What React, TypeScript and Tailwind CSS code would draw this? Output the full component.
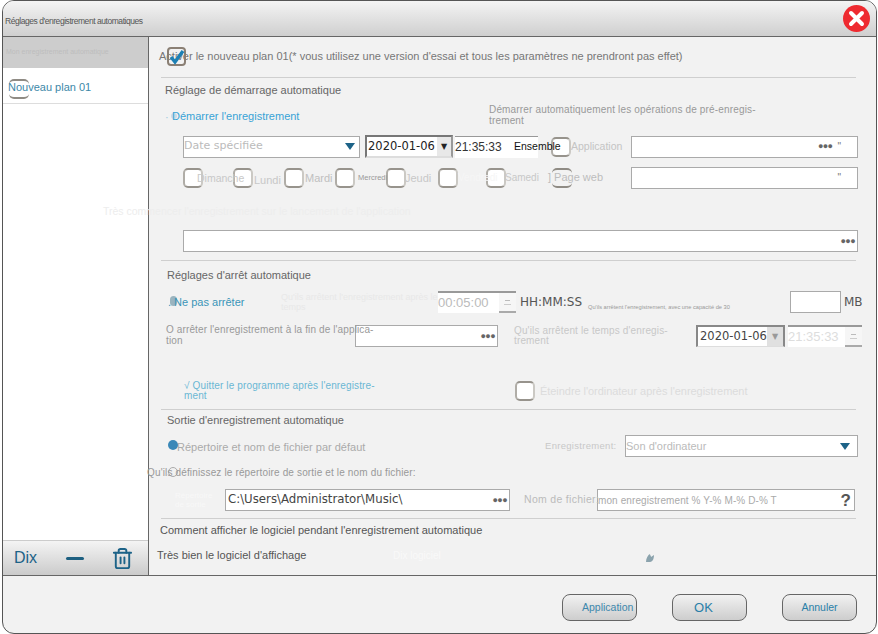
import { Trash2 } from "lucide-react";

const sans = "font-['Liberation_Sans',Arial,sans-serif]";
const dejavu = "font-['DejaVu_Sans',Verdana,sans-serif]";

function Hr() {
  return <div className="ml-[12px] h-px w-[695px] shrink-0 bg-[#cfcfcf]" />;
}

function Box({ className = "" }: { className?: string }) {
  return (
    <span
      className={`block size-[20px] shrink-0 rounded-[5px] border-2 border-[#97938c] border-l-[#b0ada7] border-r-[#cbc9c4] bg-white ${className}`}
    />
  );
}

function Dots({ className = "" }: { className?: string }) {
  return <span className={`text-[9px] font-bold leading-none tracking-[-0.6px] text-[#666] ${className}`}>●●●</span>;
}

function Field({ className = "", children }: { className?: string; children?: React.ReactNode }) {
  return (
    <div className={`flex h-[22px] shrink-0 items-center border border-[#aaa] bg-white ${className}`}>{children}</div>
  );
}

function Caret({ className = "" }: { className?: string }) {
  return (
    <svg width="10" height="7" viewBox="0 0 10 7" className={`ml-auto shrink-0 ${className}`}>
      <path d="M0 0h10L5 7z" fill="#1d6388" />
    </svg>
  );
}

function Spin() {
  return (
    <span className="ml-auto flex h-full w-[17px] shrink-0 flex-col items-center justify-center gap-[3px] border-b-2 border-[#aaa] bg-[#f6f6f6]">
      <span className="h-px w-[5px] bg-[#bbb]" />
      <span className="h-px w-[7px] bg-[#ccc]" />
    </span>
  );
}

const days = [
  { w: "w-[50px]", label: "Dimanche", cls: "left-[14px] top-[3px] text-[10.5px] text-[#c8c8c8]" },
  { w: "w-[51px]", label: "Lundi", cls: "left-[21px] top-[5px] text-[11px] text-[#c8c8c8]" },
  { w: "w-[51px]", label: "Mardi", cls: "left-[21px] top-[3px] text-[11px] text-[#c0c0c0]" },
  { w: "w-[51px]", label: "Mercredi", cls: "left-[23px] top-[3px] text-[7.5px] text-[#999]" },
  { w: "w-[52px]", label: "Jeudi", cls: "left-[19px] top-[3px] text-[11px] text-[#c8c8c8]" },
  { w: "w-[48px]", label: "Vendredi", cls: "left-[20px] top-[3px] text-[10px] text-[#f6f6f6]" },
  { w: "w-[66px]", label: "Samedi", cls: "left-[19px] top-[3px] text-[10px] text-[#c8c8c8]" },
];

export default function App() {
  return (
    <div className={`h-[634px] w-[878px] overflow-hidden bg-white pl-[2px] ${sans}`}>
      <div className="flex h-[634px] w-[875px] flex-col overflow-hidden rounded-[12px] border border-[#555] bg-[#f2f2f2]">
        {/* title bar */}
        <div className="flex h-[36px] shrink-0 items-center justify-between border-b border-[#666] bg-gradient-to-b from-[#f4f4f4] to-[#cfcfcf] pl-[2px] pr-[6px]">
          <span className="mt-[6px] text-[8.5px] tracking-[-0.45px] text-[#555]">Réglages d'enregistrement automatiques</span>
          <svg width="27" height="27" viewBox="0 0 27 27" className="mb-[1px]">
            <circle cx="13.5" cy="13.5" r="13.5" fill="#ee2a30" />
            <path d="M8 8l11 11M19 8L8 19" stroke="#fff" strokeWidth="4" strokeLinecap="round" />
          </svg>
        </div>

        <div className="flex min-h-0 flex-1">
          {/* plan list */}
          <div className="flex w-[146px] shrink-0 flex-col border-r border-[#666] bg-white">
            <div className="flex h-[31px] shrink-0 items-center bg-[#cdcdcd] pl-[3px] text-[7px] text-[#bdbdbd]">
              Mon enregistrement automatique
            </div>
            <div className="relative flex h-[36px] shrink-0 items-center border-b border-[#ddd] pl-[5px] pt-[4px] text-[11px] text-[#3d88a8]">
              <span className="absolute left-[6px] top-[11px] h-[20px] w-[20px] rounded-[5px] border-y-2 border-[#8f8b84]" />
              <span className="relative">Nouveau plan 01</span>
            </div>
            <div className="flex-1" />
            <div className="flex h-[35px] shrink-0 items-center border-t border-[#ccc] bg-gradient-to-b from-[#f4f4f4] to-[#cbcbcb] pl-[11px] text-[16px] text-[#1d6388]">
              <span className="w-[52px]">Dix</span>
              <span className="h-[3px] w-[18px] rounded-full bg-[#1d5f80]" />
              <Trash2 size={23} strokeWidth={2} className="ml-[27px]" />
            </div>
          </div>

          {/* settings */}
          <div className="flex w-[728px] shrink-0 flex-col text-[11px] text-[#666]">
            <div className="relative h-[40px] shrink-0 pl-[10px] pt-[11px] leading-[16px] text-[#777]">
              <span>Activer le nouveau plan 01(* vous utilisez une version d'essai et tous les paramètres ne prendront pas effet)</span>
              <span className="absolute left-[18px] top-[10px] flex size-[19px] items-center justify-center rounded-[4px] border-2 border-[#8a7f74]">
                <svg width="18" height="16" viewBox="0 0 18 16" className="shrink-0">
                  <path d="M3 8l4 5 8-11" fill="none" stroke="#1d80b4" strokeWidth="3.4" />
                </svg>
              </span>
            </div>
            <Hr />

            <div className="flex h-[24px] shrink-0 items-center pl-[16px] text-[#666]">Réglage de démarrage automatique</div>
            <div className="flex h-[33px] shrink-0">
              <div className="relative w-[340px] pl-[23px] pt-[6px] leading-[16px] text-[#38a3d6]">
                <span className="absolute left-[16px] top-[7px] text-[#9fc7dc]">·</span>
                <span className="absolute left-[22px] top-[11px] size-[6px] rounded-full bg-[#c9dbe6]" />
                <span className="relative">Démarrer l'enregistrement</span>
              </div>
              <div className="pt-[3px] text-[10px] leading-[10.5px] tracking-[0.16px] text-[#999]">
                Démarrer automatiquement les opérations de pré-enregis-
                <br />
                trement
              </div>
            </div>

            <div className="flex h-[23px] shrink-0 items-center pl-[34px]">
              <Field className={`w-[177px] text-[11px] text-[#bbb] ${dejavu}`}>
                <span>Date spécifiée</span>
                <Caret className="mr-[4px]" />
              </Field>
              <div className={`ml-[5px] flex h-[23px] w-[88px] shrink-0 items-center border-2 border-[#777] border-b-[#ddd] border-r-[#999] bg-white pl-[1px] text-[11.5px] text-[#222] ${dejavu}`}>
                <span className="whitespace-nowrap">2020-01-06</span>
                <span className="ml-auto flex h-full w-[14px] shrink-0 items-center justify-center bg-[#e8e8e8] text-[8px] text-[#222]">▼</span>
              </div>
              <div className="ml-[2px] flex h-[22px] w-[83px] shrink-0 items-center border-t border-[#999] bg-white text-[12px] text-[#333]">
                <span>21:35:33</span>
              </div>
              <span className="relative z-10 ml-[-24px] w-[37px] whitespace-nowrap text-[10.5px] text-[#111]">Ensemble</span>
              <Box />
              <span className="w-[60px] text-[10.5px] text-[#c4c4c4]">Application</span>
              <Field className="w-[227px] pr-[16px]">
                <Dots className="ml-auto" />
                <span className="ml-[5px] text-[10px] leading-none text-[#777]">"</span>
              </Field>
            </div>

            <div className="mt-[9px] flex h-[22px] shrink-0 items-center pl-[34px]">
              {days.map((d) => (
                <div key={d.label} className={`relative h-[22px] shrink-0 pt-[1px] ${d.w}`}>
                  <Box />
                  <span className={`absolute z-10 whitespace-nowrap leading-[16px] ${d.cls}`}>{d.label}</span>
                </div>
              ))}
              <div className="relative flex h-[22px] w-[79px] shrink-0 pt-[1px]">
                <span className="block size-[20px] rounded-[5px] border-y-2 border-[#8f8b84]" />
                <span className="absolute left-[-4px] top-[2px] whitespace-nowrap text-[#bdbdbd]">] Page web</span>
              </div>
              <Field className="w-[227px] pr-[16px]">
                <span className="ml-auto text-[10px] leading-none text-[#777]">"</span>
              </Field>
            </div>

            <div className="relative z-10 ml-[-46px] flex h-[41px] shrink-0 items-center whitespace-nowrap pt-[4px] text-[10.5px] text-[#ededed]">
              Très commencer l'enregistrement sur le lancement de l'application
            </div>
            <Field className="ml-[34px] w-[675px] justify-end pr-[2px]">
              <Dots />
            </Field>
            <div className="h-[8px] shrink-0" />
            <Hr />

            <div className="flex h-[29px] shrink-0 items-center pl-[18px] text-[#666]">Réglages d'arrêt automatique</div>
            <div className="mt-[1px] flex h-[22px] shrink-0 items-center">
              <div className="relative w-[132px] shrink-0 pl-[19px] text-[#3a95b8]">
                <span className="absolute left-[21px] top-[2px] h-[10px] w-[7px] rounded-full bg-[#9ab4bf]" />
                <span className="relative">. Ne pas arrêter</span>
              </div>
              <span className="w-[157px] shrink-0 text-[9px] leading-[10px] text-[#e8e8e8]">
                Qu'ils arrêtent l'enregistrement après le temps
              </span>
              <div className="flex h-[22px] w-[78px] shrink-0 items-center border-t-2 border-[#999] bg-white text-[13px] text-[#bbb]">
                <span>00:05:00</span>
                <Spin />
              </div>
              <span className={`ml-[4px] w-[68px] shrink-0 text-[12px] text-[#555] ${dejavu}`}>HH:MM:SS</span>
              <span className="mt-[10px] w-[202px] shrink-0 whitespace-nowrap text-[5.7px] text-[#999]">
                Qu'ils arrêtent l'enregistrement, avec une capacité de 30
              </span>
              <Field className="w-[51px]" />
              <span className={`ml-[3px] text-[12px] text-[#555] ${dejavu}`}>MB</span>
            </div>

            <div className="mt-[12px] flex h-[22px] shrink-0 items-center">
              <div className="relative z-10 ml-[17px] mt-[-2px] w-[189px] shrink-0 text-[10px] leading-[11px] tracking-[0.12px] text-[#999]">
                <div className="whitespace-nowrap">O arrêter l'enregistrement à la fin de l'applica-</div>
                <div>tion</div>
              </div>
              <Field className="w-[143px] justify-end pr-[2px]">
                <Dots />
              </Field>
              <div className="ml-[16px] w-[182px] shrink-0 text-[10px] leading-[10px] tracking-[0.14px] text-[#c8c8c8]">
                Qu'ils arrêtent le temps d'enregis-
                <br />
                trement
              </div>
              <div className={`flex h-[22px] w-[89px] shrink-0 items-center border-x-2 border-t-2 border-[#888] border-b border-b-[#ddd] bg-white pl-[2px] text-[11.5px] text-[#444] ${dejavu}`}>
                <span className="whitespace-nowrap">2020-01-06</span>
                <span className="ml-auto flex h-full w-[16px] shrink-0 items-center justify-center bg-[#e0e0e0] text-[8px] text-[#999]">▼</span>
              </div>
              <div className="ml-[3px] flex h-[22px] w-[74px] shrink-0 items-center border-t-2 border-[#999] bg-white text-[13px] text-[#ddd]">
                <span className="whitespace-nowrap">21:35:33</span>
                <Spin />
              </div>
            </div>

            <div className="mt-[33px] flex h-[22px] shrink-0 items-center">
              <div className="ml-[35px] w-[331px] shrink-0 text-[10px] leading-[10px] tracking-[0.13px] text-[#6ab7d4]">
                √ Quitter le programme après l'enregistre-
                <br />
                ment
              </div>
              <Box />
              <span className="ml-[5px] tracking-[-0.05px] text-[#dcdcdc]">Éteindre l'ordinateur après l'enregistrement</span>
            </div>
            <div className="h-[7px] shrink-0" />
            <Hr />

            <div className="flex h-[21px] shrink-0 items-center pl-[18px] text-[#666]">Sortie d'enregistrement automatique</div>
            <div className="mt-[4px] flex h-[22px] shrink-0 items-center">
              <div className="relative w-[396px] shrink-0 pl-[28px] pt-[2px] text-[#aaa]">
                <span className="absolute left-[19px] top-[3px] size-[10px] rounded-full bg-[#3a88b8]" />
                Répertoire et nom de fichier par défaut
              </div>
              <span className="w-[80px] shrink-0 text-[9.5px] tracking-[0.3px] text-[#c8c8c8]">Enregistrement:</span>
              <Field className="w-[233px] pt-[1px] text-[#bbb]">
                <span>Son d'ordinateur</span>
                <Caret className="mr-[7px]" />
              </Field>
            </div>
            <div className="relative z-10 ml-[-2px] flex h-[30px] shrink-0 items-center whitespace-nowrap text-[10px] tracking-[0.15px] text-[#999]">
              <span className="absolute left-[21px] top-[10px] size-[10px] rounded-full border border-[#aaa]" />
              <span className="relative">Qu'ils définissez le répertoire de sortie et le nom du fichier:</span>
            </div>
            <div className="mt-[2px] flex h-[22px] shrink-0 items-center">
              <span className="ml-[26px] w-[50px] shrink-0 text-[8px] leading-[9px] text-[#f8f8f8]">
                Répertoire
                <br />
                de sortie
              </span>
              <Field className="w-[285px] pl-[2px] pr-[2px]">
                <span className={`text-[11.75px] text-[#444] ${dejavu}`}>C:\Users\Administrator\Music\</span>
                <Dots className="ml-auto" />
              </Field>
              <span className="relative z-10 ml-[14px] w-[73px] shrink-0 whitespace-nowrap text-[10.5px] tracking-[0.3px] text-[#bbb]">Nom de fichier:</span>
              <Field className="w-[258px] pr-[3px]">
                <span className="whitespace-nowrap text-[10px] tracking-[0.1px] text-[#aaa]">mon enregistrement % Y-% M-% D-% T</span>
                <span className="ml-auto text-[17px] font-bold leading-none text-[#555]">?</span>
              </Field>
            </div>
            <div className="h-[7px] shrink-0" />
            <Hr />

            <div className="flex h-[22px] shrink-0 items-center pl-[11px] text-[#555]">
              Comment afficher le logiciel pendant l'enregistrement automatique
            </div>
            <div className="flex h-[28px] shrink-0 items-center pl-[8px] text-[#555]">
              <span className="w-[236px] shrink-0">Très bien le logiciel d'affichage</span>
              <span className="w-[252px] shrink-0 text-[10px] text-[#f9f9f9]">Dix logiciel</span>
              <svg width="10" height="10" viewBox="0 0 10 10" className="mt-[5px] shrink-0">
                <path d="M1 9C1 5 3 2 5 1c0 2 1 1 1 3 1-1 2-1 3-2 0 3-1 7-4 7z" fill="#8ba3ad" />
              </svg>
            </div>
          </div>
        </div>

        {/* footer */}
        <div className="flex h-[58px] shrink-0 items-start border-t border-[#666] pl-[559px] pt-[18px]">
          <button className="h-[27px] w-[75px] rounded-[8px] border border-[#666] bg-gradient-to-b from-[#f2f2f2] to-[#cdcdcd] pl-[19px] pr-0 text-left text-[10.5px] text-[#3d88ad]">
            Application
          </button>
          <button className="ml-[35px] h-[27px] w-[75px] rounded-[8px] border border-[#666] bg-gradient-to-b from-[#f2f2f2] to-[#cdcdcd] pr-[12px] text-[13px] text-[#2a7fa8]">
            OK
          </button>
          <button className="ml-[35px] h-[27px] w-[75px] rounded-[8px] border border-[#666] bg-gradient-to-b from-[#f2f2f2] to-[#cdcdcd] text-[10.5px] text-[#2a7fa8]">
            Annuler
          </button>
        </div>
      </div>
    </div>
  );
}
